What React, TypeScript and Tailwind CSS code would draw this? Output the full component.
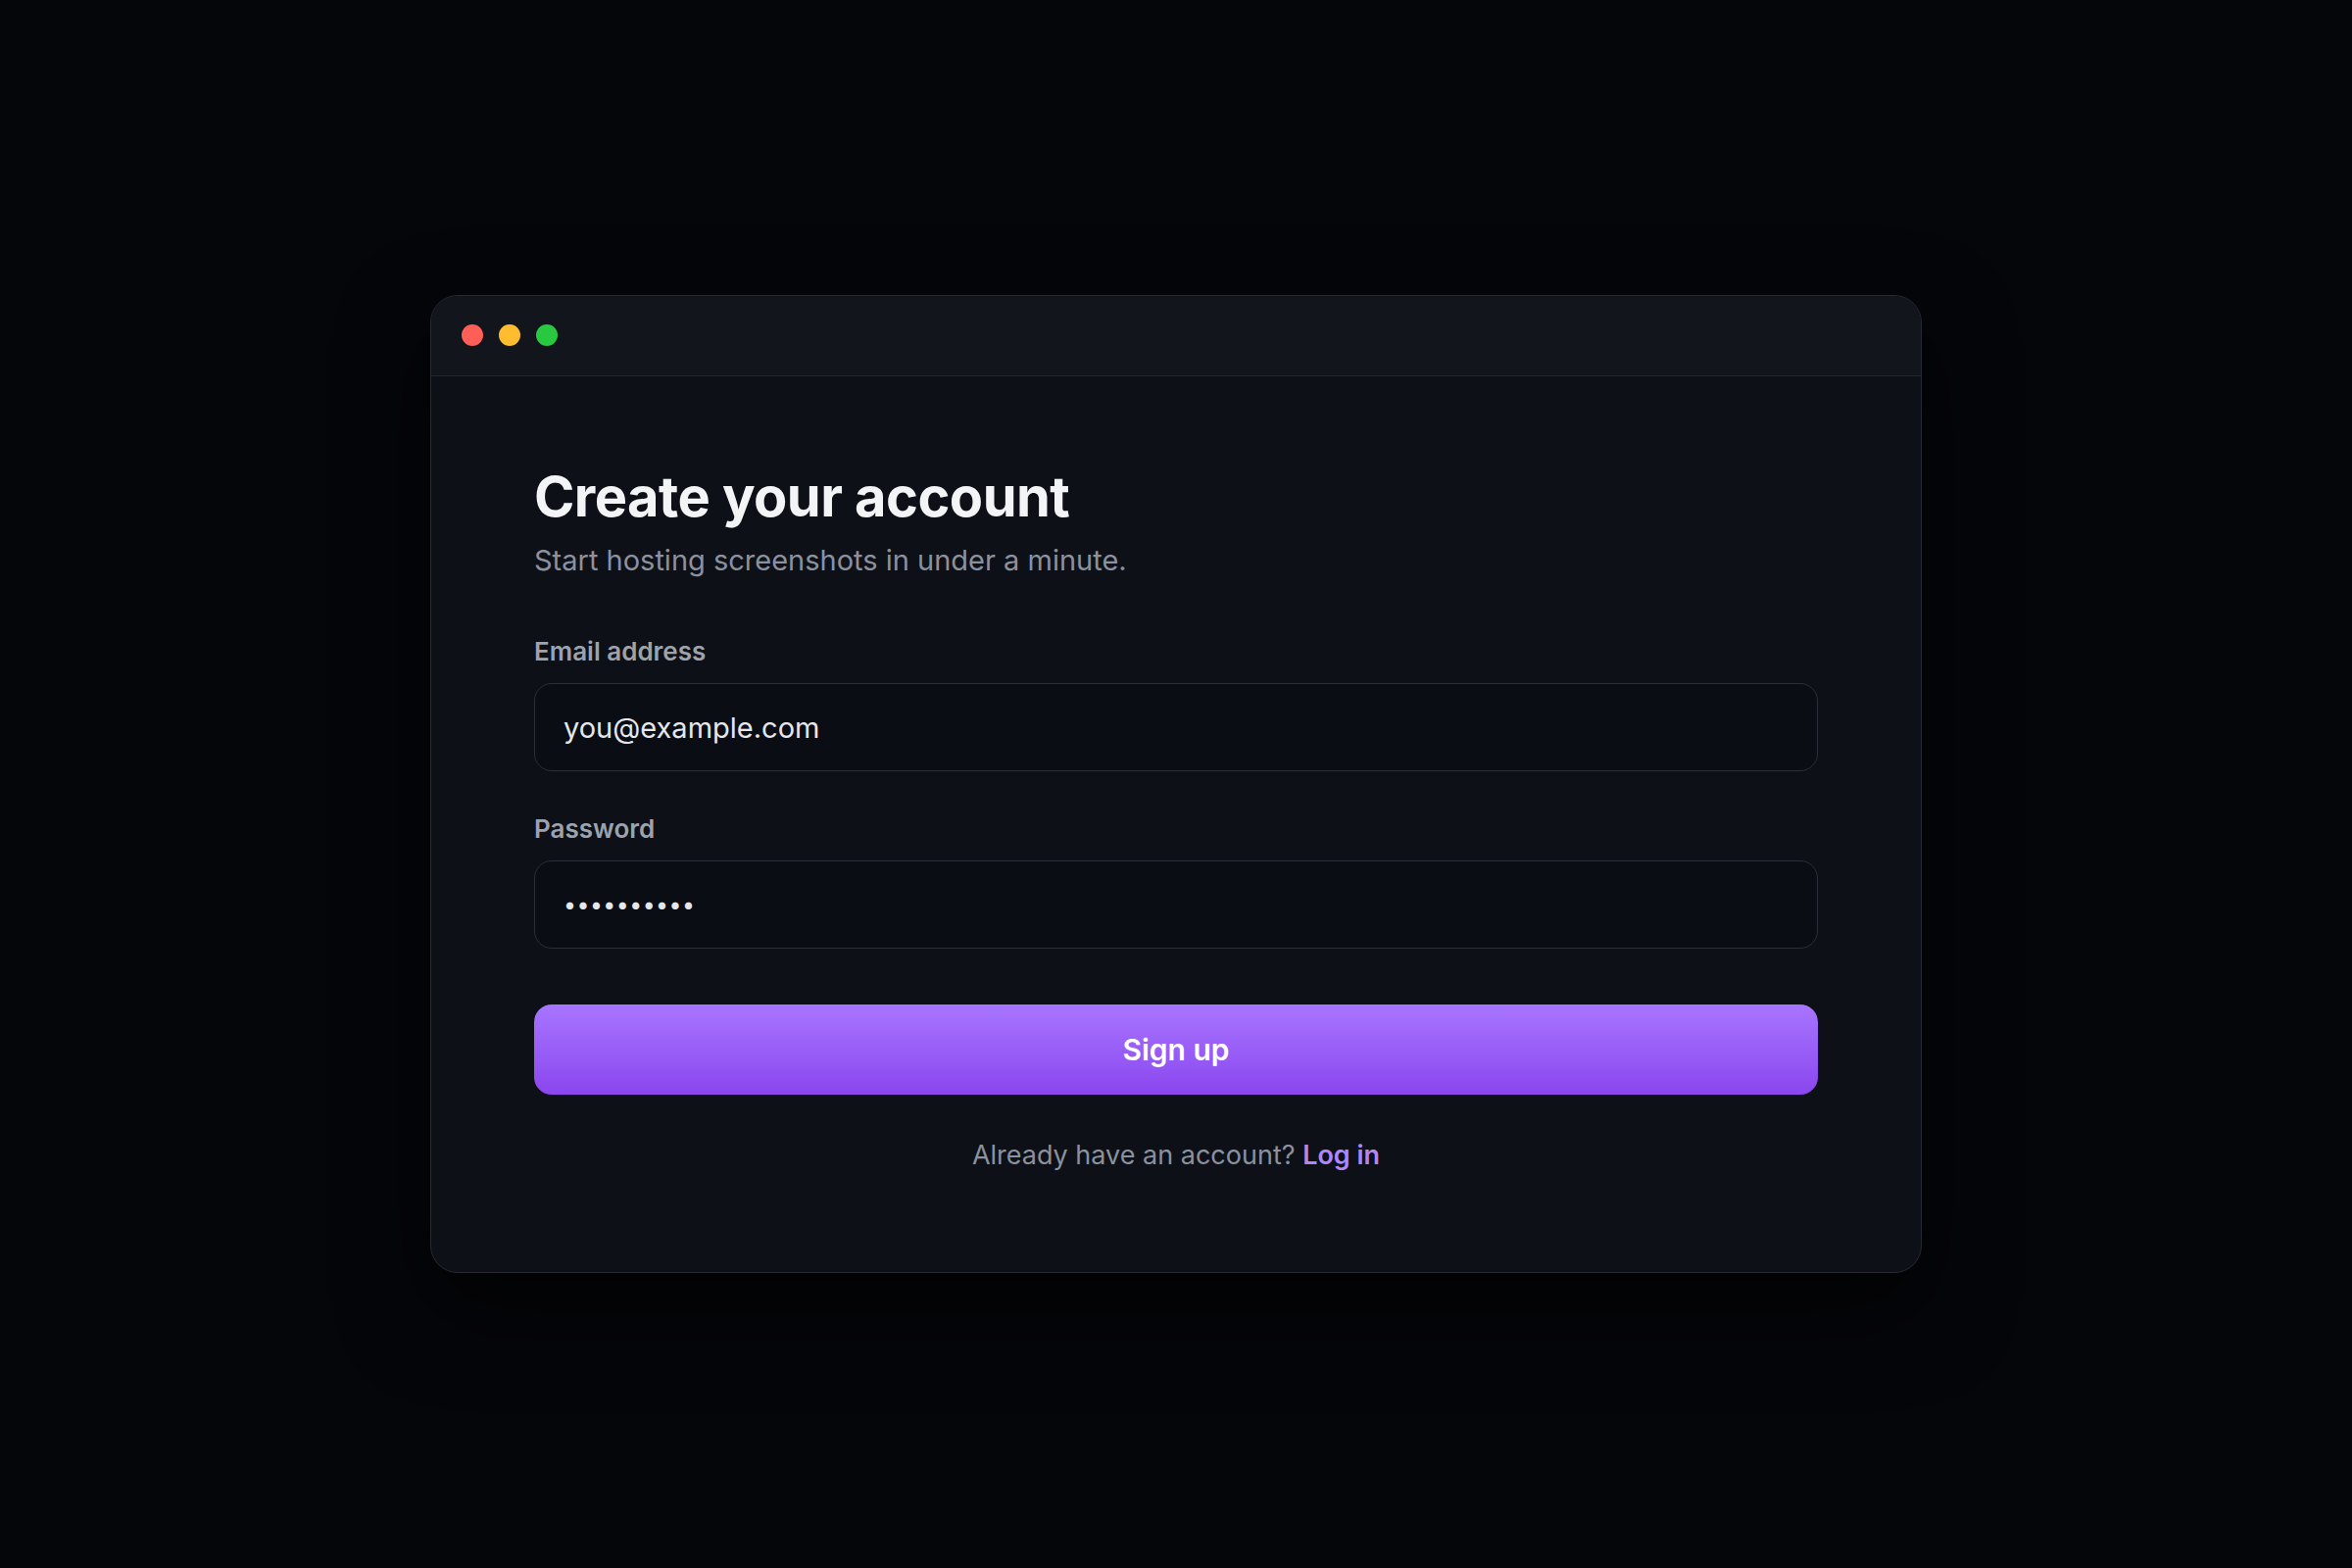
import { useState } from "react";

const FONT = { fontFamily: "Inter, 'Noto Sans', 'Liberation Sans', sans-serif" };

function TrafficLights() {
  return (
    <div className="flex items-center gap-[16px]">
      <span className="h-[22px] w-[22px] rounded-full bg-[#ff5f57]" />
      <span className="h-[22px] w-[22px] rounded-full bg-[#febc2e]" />
      <span className="h-[22px] w-[22px] rounded-full bg-[#28c840]" />
    </div>
  );
}

function Field({
  label,
  value,
  onChange,
  secret,
}: {
  label: string;
  value: string;
  onChange: (v: string) => void;
  secret?: boolean;
}) {
  return (
    <label className="flex flex-col gap-[15px]">
      <span className="text-[26px] leading-[34px] font-semibold text-[#9ca3af]">{label}</span>
      <input
        type="text"
        value={value}
        onChange={(e) => onChange(e.target.value)}
        className={
          secret
            ? "h-[90px] w-full rounded-[18px] border border-[#2a2f3a] bg-[#0a0d13] pl-[29px] pr-[29px] text-[23px] tracking-[0.5px] text-[#e5e7eb] outline-none"
            : "h-[90px] w-full rounded-[18px] border border-[#2a2f3a] bg-[#0a0d13] pl-[29px] pr-[29px] text-[29px] text-[#e5e7eb] outline-none"
        }
        style={FONT}
      />
    </label>
  );
}

export default function App() {
  const [email, setEmail] = useState("you@example.com");
  const [password, setPassword] = useState("••••••••••");

  return (
    <div className="flex min-h-screen w-full items-center justify-center bg-[#05060a]" style={FONT}>
      {/* window */}
      <div className="flex h-[998px] w-[1522px] flex-col overflow-hidden rounded-[28px] border border-[#262a34] bg-[#0d1016] shadow-[0_36px_90px_rgba(0,0,0,0.7)]">
        {/* title bar */}
        <div className="flex h-[82px] shrink-0 items-center border-b border-[#23272f] bg-[#12151c] pb-[2px] pl-[31px]">
          <TrafficLights />
        </div>

        {/* form body */}
        <div className="flex flex-col px-[105px] pt-[92px]">
          <h1 className="text-[56px] leading-[62px] font-bold tracking-[-0.01em] text-[#f3f4f6]">Create your account</h1>
          <p className="mt-[13px] text-[29px] leading-[42px] text-[#8b919e]">Start hosting screenshots in under a minute.</p>

          <div className="mt-[55px] flex flex-col gap-[42px]">
            <Field label="Email address" value={email} onChange={setEmail} />
            <Field label="Password" value={password} onChange={setPassword} secret />
          </div>

          <button className="mt-[57px] h-[92px] w-full rounded-[18px] bg-gradient-to-b from-[#a775ff] to-[#8b45ee] text-[30px] font-semibold text-white">
            Sign up
          </button>

          <p className="mt-[42px] text-center text-[27px] leading-[39px] text-[#8b919e]">
            Already have an account?{" "}
            <a href="#" className="font-semibold text-[#b386f7]">
              Log in
            </a>
          </p>
        </div>
      </div>
    </div>
  );
}
